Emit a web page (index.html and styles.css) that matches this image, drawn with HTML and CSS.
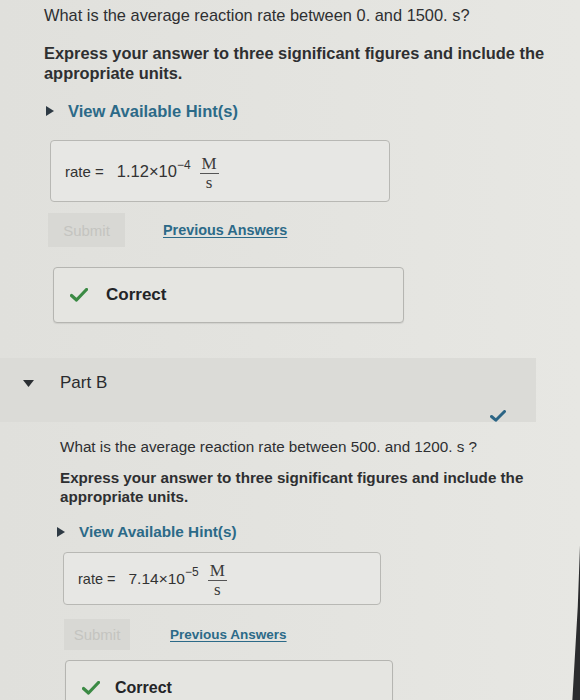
FILE: index.html
```html
<!DOCTYPE html>
<html>
<head>
<meta charset="utf-8">
<link rel="stylesheet" href="styles.css">
</head>
<body>
<div class="page">
  <section class="part part-a">
    <p class="question">What is the average reaction rate between 0. and 1500. s?</p>
    <p class="instr">Express your answer to three significant figures and include the appropriate units.</p>
    <div class="hint"><svg class="tri" width="8" height="10" viewBox="0 0 8 10"><path d="M0 0 L8 5 L0 10 Z" fill="#2e3a44"/></svg><span>View Available Hint(s)</span></div>
    <div class="answer">
      <span class="lbl">rate =</span>
      <span class="val">1.12×10<sup>−4</sup></span>
      <span class="frac"><span class="num">M</span><span class="den">s</span></span>
    </div>
    <div class="actions">
      <span class="submit">Submit</span>
      <span class="prev">Previous Answers</span>
    </div>
    <div class="correct">
      <svg class="check" width="18" height="14" viewBox="0 0 18 14"><path d="M1.5 7.5 L6.5 12 L16.5 1.5" fill="none" stroke="#3b8a44" stroke-width="3.2" stroke-linecap="round" stroke-linejoin="round"/></svg>
      <span>Correct</span>
    </div>
  </section>

  <section class="part-b">
    <div class="band">
      <svg class="down" width="11" height="7" viewBox="0 0 11 7"><path d="M0 0 L11 0 L5.5 7 Z" fill="#2b2f33"/></svg>
      <span class="title">Part B</span>
    </div>
    <div class="status"><svg width="16" height="12" viewBox="0 0 16 12"><path d="M1.5 6.5 L5.8 10.2 L14.5 1.5" fill="none" stroke="#2c6585" stroke-width="3" stroke-linecap="round" stroke-linejoin="round"/></svg></div>
    <div class="part part-b-body">
      <p class="question">What is the average reaction rate between 500. and 1200. s ?</p>
      <p class="instr">Express your answer to three significant figures and include the appropriate units.</p>
      <div class="hint"><svg class="tri" width="8" height="10" viewBox="0 0 8 10"><path d="M0 0 L8 5 L0 10 Z" fill="#2e3a44"/></svg><span>View Available Hint(s)</span></div>
      <div class="answer">
        <span class="lbl">rate =</span>
        <span class="val">7.14×10<sup>−5</sup></span>
        <span class="frac"><span class="num">M</span><span class="den">s</span></span>
      </div>
      <div class="actions">
        <span class="submit">Submit</span>
        <span class="prev">Previous Answers</span>
      </div>
      <div class="correct">
        <svg class="check" width="18" height="14" viewBox="0 0 18 14"><path d="M1.5 7.5 L6.5 12 L16.5 1.5" fill="none" stroke="#3b8a44" stroke-width="3.2" stroke-linecap="round" stroke-linejoin="round"/></svg>
        <span>Correct</span>
      </div>
    </div>
  </section>
</div>
</body>
</html>
```

FILE: styles.css
```css
html, body {
  margin: 0;
  padding: 0;
}
body {
  background: #e3e3df;
  color: #2e2f31;
  font-family: "Liberation Sans", Arial, sans-serif;
  width: 580px;
  height: 700px;
  overflow: hidden;
}
.page {
  position: relative;
  height: 700px;
  background: linear-gradient(90deg, #e0e0dc 0%, #e4e4e0 60%, #e7e7e3 100%);
}
.page::after {
  content: "";
  position: absolute;
  right: 0;
  top: 545px;
  width: 9px;
  height: 155px;
  background: #2b2c2e;
  clip-path: polygon(100% 0, 100% 100%, 15% 100%, 75% 40%);
}
.part p {
  margin: 0;
}
.part-a {
  padding: 5px 20px 0 44px;
}
.question {
  font-size: 16.4px;
  line-height: 20px;
}
.instr {
  font-weight: bold;
  font-size: 16.4px;
  line-height: 20px;
  margin-top: 18px !important;
}
.hint {
  display: flex;
  align-items: center;
  gap: 14px;
  margin-top: 18px;
  margin-left: 2px;
  color: #2c6a88;
  font-weight: bold;
  font-size: 16.5px;
  line-height: 20px;
}
.answer {
  display: flex;
  align-items: center;
  box-sizing: border-box;
  width: 340px;
  height: 62px;
  margin-top: 19px;
  margin-left: 6px;
  padding-left: 14px;
  border: 1px solid #b8b8b4;
  border-radius: 4px;
  background: #e7e7e4;
  color: #333;
}
.lbl {
  font-size: 15px;
  margin-right: 13px;
}
.val {
  font-size: 16.5px;
}
.val sup {
  font-size: 12px;
  vertical-align: 8px;
  line-height: 0;
}
.frac {
  display: inline-flex;
  flex-direction: column;
  align-items: center;
  margin-left: 9px;
  margin-top: 4px;
  font-family: "Liberation Serif", "Times New Roman", serif;
  font-size: 17px;
  line-height: 18px;
  color: #3a3a3a;
}
.frac .num {
  border-bottom: 1px solid #555;
  padding: 0 2px;
}
.actions {
  display: flex;
  align-items: center;
  margin-top: 11px;
  margin-left: 4px;
}
.submit {
  box-sizing: border-box;
  width: 77px;
  height: 34px;
  display: flex;
  align-items: center;
  justify-content: center;
  background: #d8d8d4;
  color: #c4c4c0;
  font-size: 15px;
}
.prev {
  margin-left: 38px;
  color: #2c6a88;
  font-weight: bold;
  font-size: 14.4px;
  text-decoration: underline;
  text-underline-offset: 2px;
}
.correct {
  display: flex;
  align-items: center;
  box-sizing: border-box;
  width: 351px;
  height: 56px;
  margin-top: 20px;
  margin-left: 9px;
  padding-left: 16px;
  border: 1.5px solid #b5b5b1;
  border-radius: 4px;
  background: #e5e5e1;
  box-shadow: 0 1px 1px rgba(0,0,0,0.08);
  font-weight: bold;
  font-size: 17px;
  color: #232427;
}
.correct .check {
  margin-right: 18px;
}
.part-b {
  margin-top: 35px;
}
.band {
  display: flex;
  align-items: flex-start;
  box-sizing: border-box;
  width: 536px;
  height: 64px;
  padding-top: 15px;
  background: #dbdbd7;
}
.band .down {
  margin-left: 23px;
  margin-top: 7px;
}
.band .title {
  margin-left: 26px;
  font-size: 17px;
  line-height: 20px;
  color: #2a2b2e;
}
.status {
  display: flex;
  justify-content: flex-end;
  width: 506px;
  margin-top: -12px;
  height: 14px;
}
.part-b-body {
  padding: 13px 20px 0 60px;
}
.part-b-body .question {
  font-size: 15.25px;
}
.part-b-body .instr {
  font-size: 15.2px;
  line-height: 19px;
  margin-top: 11px !important;
}
.part-b-body .hint {
  font-size: 15.3px;
  margin-top: 16px;
  margin-left: -3px;
}
.part-b-body .answer {
  width: 318px;
  height: 53px;
  margin-top: 10px;
  margin-left: 3px;
}
.part-b-body .lbl {
  font-size: 14.5px;
}
.part-b-body .val {
  font-size: 15.5px;
}
.part-b-body .actions {
  margin-top: 14px;
}
.part-b-body .submit {
  width: 66px;
  height: 31px;
}
.part-b-body .prev {
  margin-left: 40px;
  font-size: 13.5px;
}
.part-b-body .correct {
  width: 328px;
  margin-top: 10px;
  margin-left: 5px;
  font-size: 16px;
}
.part-b-body .correct .check {
  margin-right: 15px;
}
```
